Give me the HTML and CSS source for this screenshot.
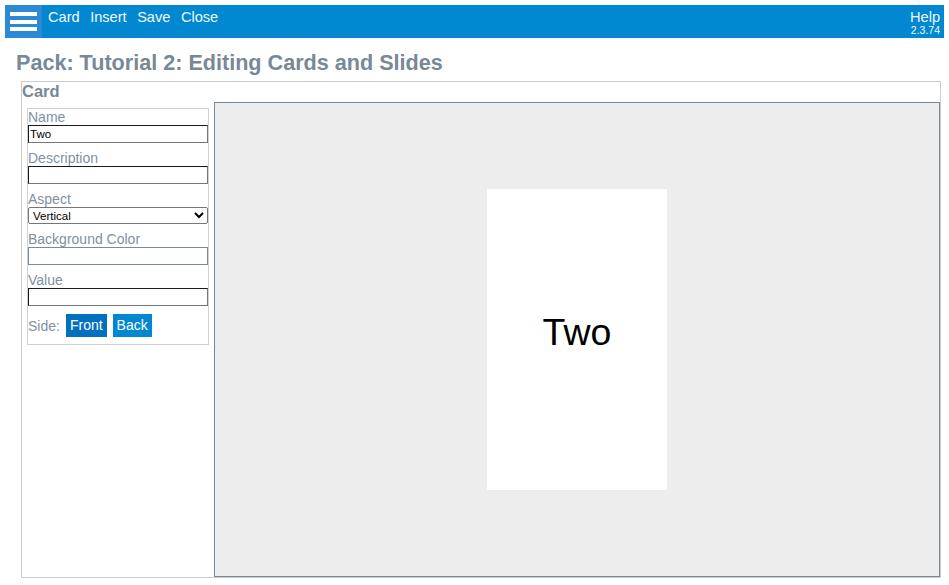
FILE: index.html
```html
<!DOCTYPE html>
<html lang="en">
<head>
<meta charset="utf-8">
<title>Pack: Tutorial 2: Editing Cards and Slides</title>
<link rel="stylesheet" href="styles.css">
</head>
<body>
<header class="topbar">
  <button class="burger" type="button" aria-label="Menu"><span></span><span></span><span></span></button>
  <nav class="menu">
    <a class="menu-item">Card</a>
    <a class="menu-item">Insert</a>
    <a class="menu-item">Save</a>
    <a class="menu-item">Close</a>
  </nav>
  <div class="help">
    <div class="help-label">Help</div>
    <div class="version">2.3.74</div>
  </div>
</header>

<h1 class="pack-title">Pack: Tutorial 2: Editing Cards and Slides</h1>

<section class="card-panel">
  <h2 class="panel-title">Card</h2>
  <div class="editor">
    <form class="props">
      <label class="field-label">Name</label>
      <input class="field-input" type="text" value="Two">
      <label class="field-label">Description</label>
      <input class="field-input" type="text" value="">
      <label class="field-label">Aspect</label>
      <select class="field-select"><option>Vertical</option><option>Horizontal</option></select>
      <label class="field-label">Background Color</label>
      <input class="field-input color-input" type="text" value="">
      <label class="field-label">Value</label>
      <input class="field-input" type="text" value="">
      <div class="side-row">
        <span class="side-label">Side:</span>
        <button class="side-btn active" type="button">Front</button>
        <button class="side-btn" type="button">Back</button>
      </div>
    </form>
    <div class="preview">
      <div class="card-face"><span class="card-text">Two</span></div>
    </div>
  </div>
</section>
</body>
</html>
```

FILE: styles.css
```css
html, body {
  margin: 0;
  padding: 0;
  background: #ffffff;
  font-family: "Liberation Sans", Arial, sans-serif;
}

.topbar {
  margin: 5px 5px 0 5px;
  height: 33px;
  background: #0288d1;
  display: flex;
  align-items: stretch;
  padding-right: 4px;
}

.burger {
  width: 37px;
  padding: 0;
  margin: 0;
  border: 0;
  background: #2c89d6;
  display: flex;
  flex-direction: column;
  justify-content: center;
  align-items: center;
  gap: 3.5px;
}

.burger span {
  display: block;
  width: 27px;
  height: 4px;
  background: #ffffff;
}

.menu {
  display: flex;
  gap: 10.5px;
  margin-left: 6px;
  padding-top: 4px;
}

.menu-item {
  font-size: 14.6px;
  color: #f0f8ff;
  line-height: normal;
}

.help {
  margin-left: auto;
  text-align: right;
  padding-top: 4px;
  color: #f0f8ff;
}

.help-label {
  font-size: 14.6px;
}

.version {
  font-size: 10.5px;
  line-height: 10px;
}

.pack-title {
  margin: 12px 0 6px 16px;
  font-size: 21.6px;
  line-height: 25px;
  font-weight: bold;
  color: #778899;
}

.card-panel {
  margin-left: 21px;
  width: 920px;
  height: 497px;
  box-sizing: border-box;
  border: 1px solid #cccccc;
  display: flex;
  flex-direction: column;
}

.panel-title {
  margin: 0;
  font-size: 16.5px;
  line-height: 19px;
  padding-bottom: 1px;
  font-weight: bold;
  color: #778899;
}

.editor {
  flex: 1;
  display: flex;
  align-items: flex-start;
  min-height: 0;
}

.props {
  margin: 6px 0 0 5px;
  width: 182px;
  box-sizing: border-box;
  border: 1px solid #d0d0d0;
  padding: 0 0 7px 0;
  display: flex;
  flex-direction: column;
}

.field-label {
  font-size: 14px;
  line-height: 16px;
  color: #8091a2;
}

.field-input {
  width: 180px;
  height: 18px;
  box-sizing: border-box;
  margin: 0 0 7px 0;
  padding: 0 1px;
  border: 1px solid;
  border-color: #1a1a1a #767676 #767676 #1a1a1a;
  font-family: "Liberation Sans", Arial, sans-serif;
  font-size: 11.5px;
  color: #000000;
  background: #ffffff;
  outline: none;
}

.color-input {
  border-color: #7a8a99;
}

.field-select {
  width: 180px;
  height: 17px;
  box-sizing: border-box;
  margin: 0 0 7px 0;
  padding: 0;
  border: 1px solid #767676;
  border-radius: 2px;
  font-family: "Liberation Sans", Arial, sans-serif;
  font-size: 11.5px;
  color: #000000;
  background: #ffffff;
}

.side-row {
  display: flex;
  align-items: center;
  gap: 6px;
  margin-top: 1px;
  height: 23px;
}

.side-label {
  font-size: 14px;
  color: #8091a2;
}

.side-btn {
  height: 23px;
  padding: 0 4px;
  margin: 0;
  border: 0;
  background: #0288d1;
  color: #ffffff;
  font-family: "Liberation Sans", Arial, sans-serif;
  font-size: 14px;
  line-height: 23px;
}

.side-btn.active {
  background: #0070bf;
}

.preview {
  flex: 1;
  align-self: stretch;
  margin-left: 5px;
  box-sizing: border-box;
  border: 1px solid #778899;
  background: #ededed;
  display: flex;
  align-items: center;
  justify-content: center;
}

.card-face {
  width: 180px;
  height: 301px;
  box-sizing: border-box;
  padding-bottom: 14px;
  background: #ffffff;
  box-shadow: 0 0 1.5px rgba(0, 0, 0, 0.04);
  display: flex;
  align-items: center;
  justify-content: center;
}

.card-text {
  font-size: 37.5px;
  color: #000000;
}
```
